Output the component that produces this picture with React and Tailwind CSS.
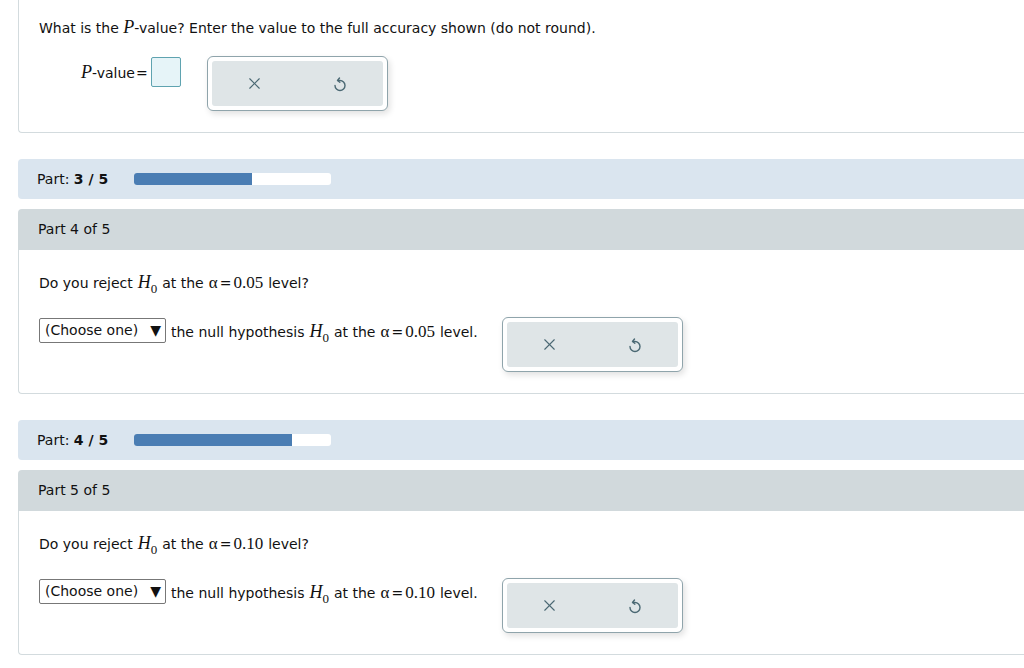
import { X } from "lucide-react";

const font = { fontFamily: "'DejaVu Sans', Verdana, sans-serif" };

function Math({ children }) {
    return (
        <span className="italic text-[18px]" style={{ fontFamily: "'Liberation Serif', 'Times New Roman', serif" }}>
            {children}
        </span>
    );
}

function Num({ children }) {
    return (
        <span className="text-[17px]" style={{ fontFamily: "'Liberation Serif', 'Times New Roman', serif" }}>
            {children}
        </span>
    );
}

function H0() {
    return (
        <span className="inline-flex items-baseline">
            <Math>H</Math>
            <span className="relative top-[5px] text-[13px]" style={{ fontFamily: "'Liberation Serif', serif" }}>0</span>
        </span>
    );
}

function UndoIcon() {
    return (
        <svg width="14" height="16" viewBox="0 0 14 16" fill="none" stroke="#4a6873" strokeWidth="1.4" strokeLinecap="round" strokeLinejoin="round">
            <path d="M5 4.5 h2 a5 5 0 1 1 -5 5" />
            <path d="M6.5 2 L4.5 4.5 L6.8 6.3" />
        </svg>
    );
}

function ActionBox() {
    return (
        <div className="w-[181px] h-[55px] rounded-[6px] border border-[#8fa4ab] bg-white p-[4px] shadow-[2px_3px_6px_rgba(0,0,0,0.12)]">
            <div className="flex h-full items-center rounded-[3px] bg-[#dfe5e7]">
                <div className="flex w-1/2 justify-center">
                    <X size={19} strokeWidth={1.4} color="#4a6873" />
                </div>
                <div className="flex w-1/2 justify-center">
                    <UndoIcon />
                </div>
            </div>
        </div>
    );
}

function ProgressBar({ label, pct }) {
    return (
        <div className="mt-[26px] flex h-[40px] items-center rounded-l-[4px] bg-[#dae5ef] pl-[19px]">
            <span className="w-[97px] text-[14px] text-[#111]">
                Part: <b>{label}</b>
            </span>
            <div className="h-[12px] w-[197px] overflow-hidden rounded-[3px] bg-white">
                <div className="h-full bg-[#4a7db3]" style={{ width: pct }} />
            </div>
        </div>
    );
}

function PartSection({ part, alpha }) {
    return (
        <div className="mt-[10px]">
            <div className="flex h-[41px] items-center rounded-tl-[4px] bg-[#d1d9dc] pl-[20px] text-[14px] text-[#111]">
                Part {part} of 5
            </div>
            <div className="h-[144px] rounded-bl-[4px] border-b border-l border-[#d3dbde] pl-[20px] text-[14px] text-[#111]">
                <div className="flex h-[20px] items-baseline gap-[5px] pt-[19px]">
                    <span>Do you reject</span> <H0 /> <span>at the</span>
                    <span className="flex items-baseline">
                        <Num>α</Num><span className="mx-[2px]">=</span><Num>{alpha}</Num>
                    </span>
                    <span>level?</span>
                </div>
                <div className="mt-[47px] flex items-start">
                    <div className="mt-[1px] flex h-[25px] w-[127px] items-center justify-between rounded-[2px] border border-[#777] pl-[5px] pr-[4px] text-[14px]">
                        <span>(Choose one)</span>
                        <span className="text-[14px]">▼</span>
                    </div>
                    <div className="ml-[5px] mt-[1px] flex items-baseline gap-[5px]">
                        <span>the null hypothesis</span> <H0 /> <span>at the</span>
                        <span className="flex items-baseline">
                            <Num>α</Num><span className="mx-[2px]">=</span><Num>{alpha}</Num>
                        </span>
                        <span>level.</span>
                    </div>
                    <div className="ml-[24px]">
                        <ActionBox />
                    </div>
                </div>
            </div>
        </div>
    );
}

export default function App() {
    return (
        <div className="h-[668px] w-[1024px] overflow-hidden bg-white pl-[18px]" style={font}>
            <div className="w-[1030px]">
                <div className="h-[133px] rounded-bl-[4px] border-b border-l border-[#d3dbde] pl-[20px] text-[14px] text-[#111]">
                    <div className="flex items-baseline pt-[14px]">
                        <span>What is the&nbsp;</span><Math>P</Math><span>-value? Enter the value to the full accuracy shown (do not round).</span>
                    </div>
                    <div className="mt-[15px] flex items-start">
                        <div className="ml-[42px] mt-[3px] flex items-baseline">
                            <Math>P</Math><span>-value</span><span className="ml-[1px]">=</span>
                        </div>
                        <div className="ml-[3px] mt-[1px] h-[30px] w-[30px] rounded-[2px] border border-[#5fa3b0] bg-[#e6f4f8]" />
                        <div className="ml-[26px]">
                            <ActionBox />
                        </div>
                    </div>
                </div>

                <ProgressBar label="3 / 5" pct="60%" />
                <PartSection part={4} alpha="0.05" />

                <ProgressBar label="4 / 5" pct="80%" />
                <PartSection part={5} alpha="0.10" />
            </div>
        </div>
    );
}
